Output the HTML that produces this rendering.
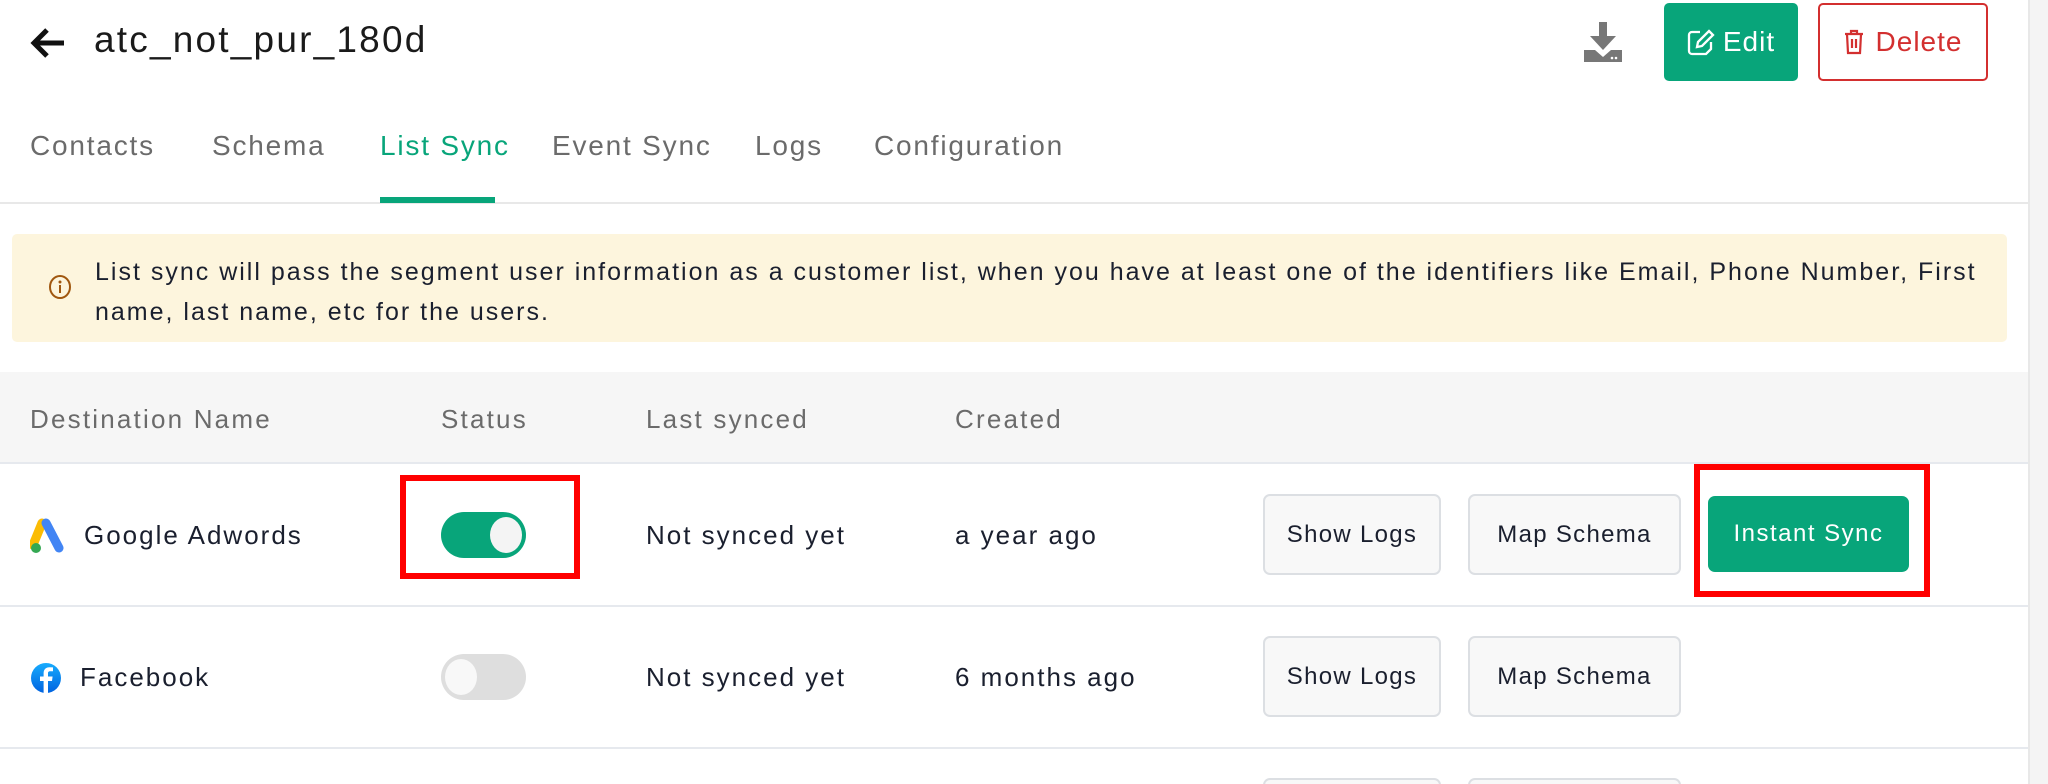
<!DOCTYPE html>
<html style="width:2048px;height:784px;overflow:hidden"><head><meta charset="utf-8"><style>
*{box-sizing:border-box;margin:0;padding:0}
body{width:2048px;height:784px;overflow:hidden;background:#fff;font-family:"Liberation Sans",sans-serif;color:#1a1f2e;position:relative}
.a{position:absolute}
.tab{position:absolute;top:130px;font-size:28px;letter-spacing:1.8px;color:#6b6b6b;white-space:nowrap}
.btn{position:absolute;border:2px solid #dcdfe3;background:#f8f8f8;border-radius:7px;font-size:24px;letter-spacing:1.3px;display:flex;align-items:center;justify-content:center;color:#1a1f2e}
.cell{position:absolute;font-size:26px;letter-spacing:2px;white-space:nowrap}
.hd{position:absolute;top:404px;font-size:26px;letter-spacing:2.2px;color:#6b6b6b}
</style></head><body>
<div class="a" style="left:2028px;top:0;width:20px;height:784px;background:#f4f4f4;border-left:2px solid #e8e8e8"></div>
<svg class="a" style="left:30px;top:27px" width="36" height="32" viewBox="0 0 36 32"><path d="M34 16H5M17 3L4 16l13 13" fill="none" stroke="#111" stroke-width="5"/></svg>
<div class="a" style="left:94px;top:19px;font-size:37px;letter-spacing:2.2px;color:#1a1a1a">atc_not_pur_180d</div>
<svg class="a" style="left:1584px;top:22px" width="38" height="40" viewBox="0 0 38 40"><rect x="15" y="0" width="8" height="16" fill="#777"/><path d="M6 14h26L19 28z" fill="#777"/><path d="M0 28h11l8 7 8-7h11v12H0z" fill="#777"/><circle cx="28" cy="36" r="1.3" fill="#fff"/><circle cx="32" cy="36" r="1.3" fill="#fff"/></svg>
<div class="a" style="left:1664px;top:3px;width:134px;height:78px;background:#08a57a;border-radius:5px;color:#fff;font-size:28px;letter-spacing:1px;display:flex;align-items:center;justify-content:center;gap:8px">
<svg width="28" height="28" viewBox="0 0 28 28" fill="none" stroke="#fff" stroke-width="2.3"><path d="M13 4H5a3 3 0 0 0-3 3v16a3 3 0 0 0 3 3h14l5-5v-7"/><path d="M22 3l4 4-11 11-5 1 1-5z"/></svg>Edit</div>
<div class="a" style="left:1818px;top:3px;width:170px;height:78px;border:2px solid #d32f2f;border-radius:5px;color:#d32f2f;font-size:28px;letter-spacing:1px;display:flex;align-items:center;justify-content:center;gap:12px">
<svg width="20" height="26" viewBox="0 0 20 26" fill="none" stroke="#d32f2f" stroke-width="2.2"><path d="M1 5h18M7 5V2h6v3M3 5l1 19h12l1-19M8 10v9M12 10v9"/></svg>Delete</div>
<div class="tab" style="left:30px">Contacts</div>
<div class="tab" style="left:212px">Schema</div>
<div class="tab" style="left:380px;color:#08a57a">List Sync</div>
<div class="tab" style="left:552px">Event Sync</div>
<div class="tab" style="left:755px">Logs</div>
<div class="tab" style="left:874px">Configuration</div>
<div class="a" style="left:0;top:202px;width:2028px;height:2px;background:#e8e8e8"></div>
<div class="a" style="left:380px;top:197px;width:115px;height:6px;background:#08a57a"></div>
<div class="a" style="left:12px;top:234px;width:1995px;height:108px;background:#fdf5dd;border-radius:5px"></div>
<svg class="a" style="left:48px;top:274px" width="24" height="26" viewBox="0 0 24 26"><ellipse cx="12" cy="13" rx="10" ry="11" fill="none" stroke="#a0570f" stroke-width="2"/><circle cx="12" cy="8" r="1.5" fill="#a0570f"/><path d="M12 11v8" stroke="#a0570f" stroke-width="2"/></svg>
<div class="a" style="left:95px;top:252px;font-size:25px;letter-spacing:2px;line-height:40px;color:#1a1f2e;white-space:nowrap">List sync will pass the segment user information as a customer list, when you have at least one of the identifiers like Email, Phone Number, First<br>name, last name, etc for the users.</div>
<div class="a" style="left:0;top:372px;width:2028px;height:92px;background:#f6f6f6;border-bottom:2px solid #e6e9ee"></div>
<div class="hd" style="left:30px">Destination Name</div>
<div class="hd" style="left:441px">Status</div>
<div class="hd" style="left:646px">Last synced</div>
<div class="hd" style="left:955px">Created</div>
<div class="a" style="left:0;top:605px;width:2028px;height:2px;background:#e6e9ee"></div>
<div class="a" style="left:0;top:747px;width:2028px;height:2px;background:#e6e9ee"></div>
<svg class="a" style="left:30px;top:518px" width="34" height="36" viewBox="0 0 34 36"><path d="M12 5L3 27" stroke="#fbbc04" stroke-width="9" stroke-linecap="round"/><path d="M16 5l13 25" stroke="#4285f4" stroke-width="9" stroke-linecap="round"/><circle cx="6" cy="30" r="5" fill="#34a853"/></svg>
<div class="cell" style="left:84px;top:520px">Google Adwords</div>
<div class="a" style="left:441px;top:512px;width:85px;height:46px;border-radius:23px;background:#08a57a"></div>
<div class="a" style="left:490px;top:517px;width:32px;height:36px;border-radius:50%;background:#f4f4f4"></div>
<div class="a" style="left:400px;top:475px;width:180px;height:104px;border:6px solid #ff0000"></div>
<div class="cell" style="left:646px;top:520px">Not synced yet</div>
<div class="cell" style="left:955px;top:520px">a year ago</div>
<div class="btn" style="left:1263px;top:494px;width:178px;height:81px">Show Logs</div>
<div class="btn" style="left:1468px;top:494px;width:213px;height:81px">Map Schema</div>
<div class="a" style="left:1708px;top:496px;width:201px;height:76px;background:#08a57a;border-radius:7px;color:#fff;font-size:24px;letter-spacing:1.5px;display:flex;align-items:center;justify-content:center">Instant Sync</div>
<div class="a" style="left:1694px;top:464px;width:236px;height:133px;border:6px solid #ff0000"></div>
<svg class="a" style="left:30px;top:662px" width="32" height="32" viewBox="0 0 32 32"><defs><linearGradient id="fb" x1="0" y1="0" x2="0" y2="1"><stop offset="0" stop-color="#18acfe"/><stop offset="1" stop-color="#0163e0"/></linearGradient></defs><circle cx="16" cy="16" r="15" fill="url(#fb)"/><path d="M18 31V19h4l.6-4.5H18v-3c0-1.3.4-2.2 2.3-2.2H23V5.4a32 32 0 0 0-3.5-.2c-3.5 0-5.9 2.1-5.9 6v3.3H10V19h3.6v12z" fill="#fff"/></svg>
<div class="cell" style="left:80px;top:662px">Facebook</div>
<div class="a" style="left:441px;top:654px;width:85px;height:46px;border-radius:23px;background:#dedede"></div>
<div class="a" style="left:445px;top:659px;width:32px;height:36px;border-radius:50%;background:#f8f8f8"></div>
<div class="cell" style="left:646px;top:662px">Not synced yet</div>
<div class="cell" style="left:955px;top:662px">6 months ago</div>
<div class="btn" style="left:1263px;top:636px;width:178px;height:81px">Show Logs</div>
<div class="btn" style="left:1468px;top:636px;width:213px;height:81px">Map Schema</div>
<div class="a" style="left:0;top:776px;width:2028px;height:8px;overflow:hidden">
<div class="btn" style="left:1263px;top:2px;width:178px;height:40px"></div>
<div class="btn" style="left:1468px;top:2px;width:213px;height:40px"></div>
</div>
</body></html>
